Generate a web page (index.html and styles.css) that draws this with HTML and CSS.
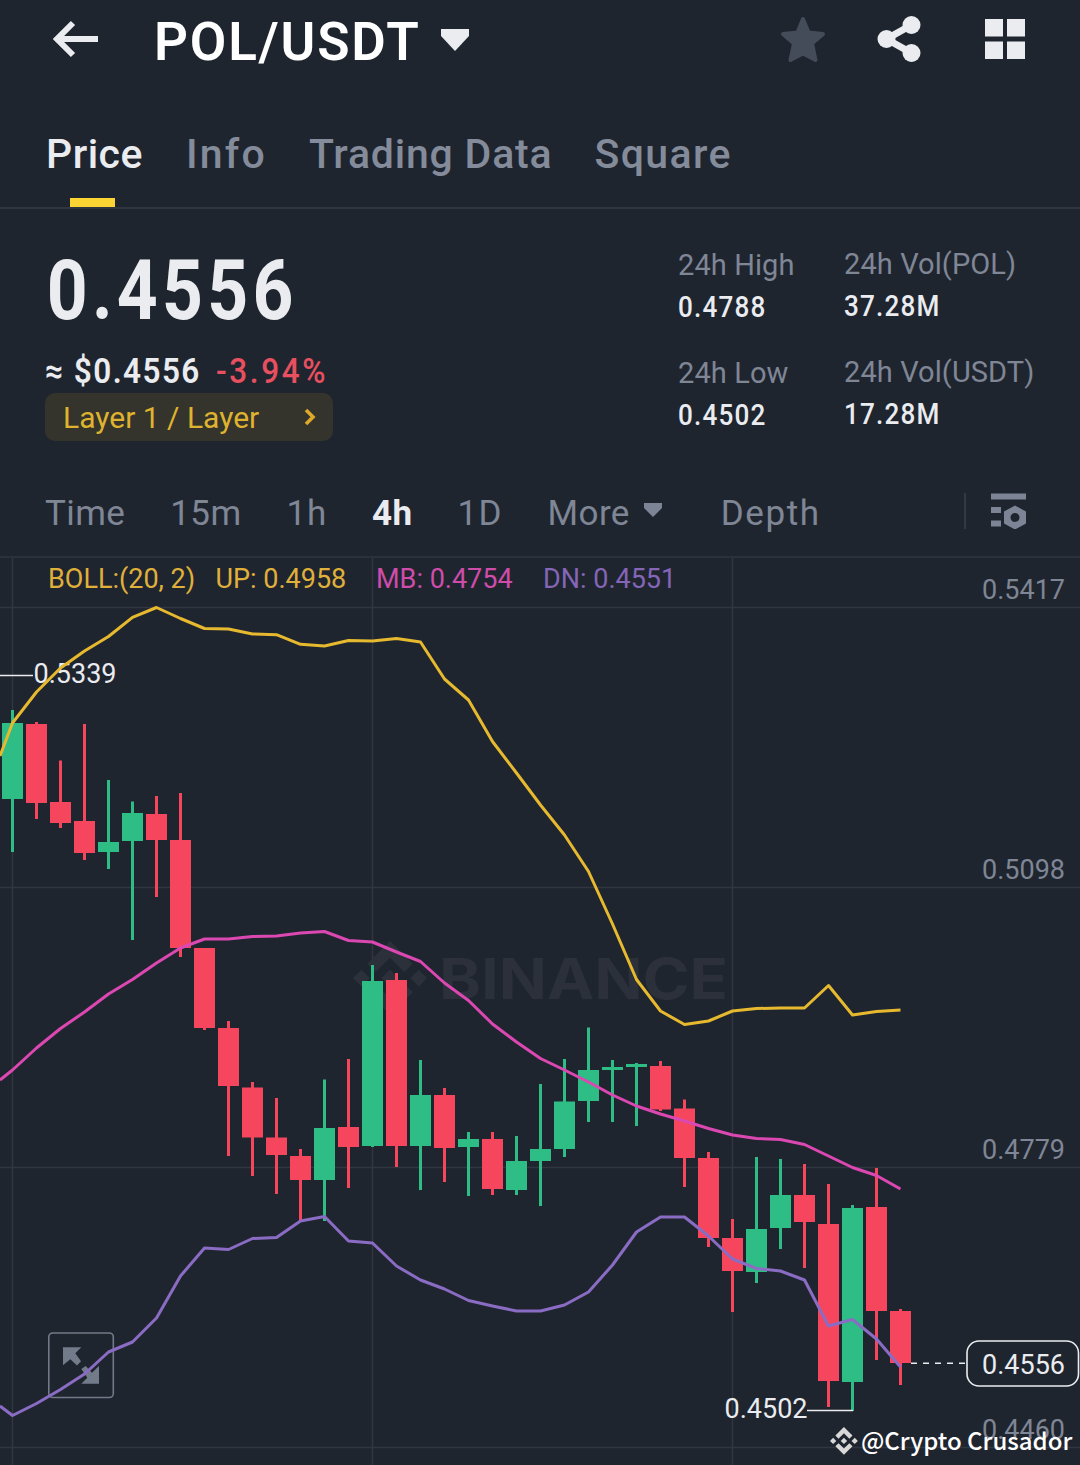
FILE: index.html
```
<!DOCTYPE html>
<html lang="en">
<head>
  <meta charset="UTF-8" />
  <meta name="viewport" content="width=device-width, initial-scale=1.0"/>
  <title>POL/USDT</title>
  <link rel="stylesheet" href="styles.css">
</head>
<body>
  <header class="header">
    <svg class="back" width="48" height="40" viewBox="0 0 48 40">
      <path d="M47 20H6M22 4L6 20l16 16" fill="none" stroke="#eaecef" stroke-width="6"/>
    </svg>
    <h1 class="pair">POL/USDT</h1>
    <svg class="pair-caret" width="28" height="22" viewBox="0 0 28 22">
      <path d="M0 0h28v7L14 22 0 7z" fill="#eaecef"/>
    </svg>
    <div class="actions">
      <svg width="46" height="48" viewBox="0 0 46 48">
        <path d="M23 3l5.500 13.500L43 18 32 27.500l3.500 16.500L23 37.500 10.500 44 14 27.500 3 18l14.500-1.500z" fill="#444c5a" stroke="#444c5a" stroke-width="4" stroke-linejoin="round"/>
      </svg>
      <svg class="share" width="44" height="48" viewBox="0 0 44 48">
        <path d="M34.500 10L9.500 24l25 14" fill="none" stroke="#eaecef" stroke-width="7"/>
        <circle cx="9.500" cy="24" r="9" fill="#eaecef"/>
        <circle cx="34.500" cy="10" r="9" fill="#eaecef"/>
        <circle cx="34.500" cy="38" r="9" fill="#eaecef"/>
      </svg>
      <svg class="grid-icon" width="40" height="40" viewBox="0 0 40 40">
        <path d="M0 0h18v17.500H0zM22 0h18v17.500H22zM0 22.500h18V40H0zM22 22.500h18V40H22z" fill="#eaecef"/>
      </svg>
    </div>
  </header>

  <nav class="tabs">
    <a class="tab tab-price active">Price</a>
    <a class="tab tab-info">Info</a>
    <a class="tab">Trading Data</a>
    <a class="tab tab-square">Square</a>
  </nav>

  <section class="summary">
    <div class="quote">
      <div class="last-price">0.4556</div>
      <div class="quote-row">
        <span class="usd">≈ $0.4556</span>
        <span class="change">-3.94%</span>
      </div>
      <div class="tag">
        <span>Layer 1 / Layer</span>
        <svg width="12" height="18" viewBox="0 0 12 18">
          <path d="M2 2l7 7-7 7" fill="none" stroke="#dca92a" stroke-width="3.600"/>
        </svg>
      </div>
    </div>
    <div class="stats">
      <div class="stats-col">
        <div class="label">24h High</div>
        <div class="value">0.4788</div>
        <div class="label">24h Low</div>
        <div class="value">0.4502</div>
      </div>
      <div class="stats-col stats-vol">
        <div class="label">24h Vol(POL)</div>
        <div class="value">37.28M</div>
        <div class="label">24h Vol(USDT)</div>
        <div class="value">17.28M</div>
      </div>
    </div>
  </section>

  <nav class="intervals">
    <span>Time</span>
    <span>15m</span>
    <span class="short">1h</span>
    <span class="active">4h</span>
    <span class="day">1D</span>
    <span class="more">More
      <svg width="18" height="14" viewBox="0 0 18 14"><path d="M0 0h18v5L9 14 0 5z" fill="#7c8496"/></svg>
    </span>
    <span class="depth">Depth</span>
    <div class="tools">
      <svg width="36" height="36" viewBox="0 0 36 36">
        <path d="M0 .5h35v6H0zM0 14h10v6H0zM0 27.500h10v6H0z" fill="#7c8496"/>
        <path fill-rule="evenodd" d="M24 12.500l11 6v12l-11 6-11-6v-12zM24 20a4.500 4.500 0 1 0 0 9 4.500 4.500 0 0 0 0-9z" fill="#7c8496"/>
      </svg>
    </div>
  </nav>

  <svg class="chart" width="1080" height="907" viewBox="0 558 1080 907">
    <defs>
      <path id="logo" d="M38.730 53.200l24.590-24.580 24.600 24.600 14.300-14.310L63.320 0l-38.900 38.900zM0 63.310L14.300 49l14.310 14.310-14.310 14.300zM38.730 73.410L63.320 98l24.600-24.600 14.310 14.290-38.910 38.910-38.900-38.880zM98 63.310L112.300 49l14.310 14.300-14.310 14.320zM77.830 63.300L63.320 48.780 48.810 63.280l14.510 14.500z"/>
    </defs>

    <!-- grid -->
    <path class="grid" d="M12.500 558V1465M372.500 558V1465M732.500 558V1465M0 607.500H1080M0 887.500H1080M0 1167.500H1080M0 1447.500H1080"/>

    <g class="brand">
      <use href="#logo" transform="translate(353 941) scale(.585)"/>
      <text x="439" y="998.500" textLength="289" lengthAdjust="spacingAndGlyphs">BINANCE</text>
    </g>

    <text class="mark" x="33.500" y="682.500">0.5339</text>
    <path class="mark-line" d="M0 675.500H33"/>

    <g id="candles"></g>

    <rect class="expand" x="48.800" y="1333" width="64.500" height="64.500" rx="4"/>
    <path class="expand-arrows" d="M63 1347.300h18.300l-6 6 5.700 8-4 4.300-6.700-6.300-7.300 6zM99 1366v17.700H81.300l6-6-6-8.700 4.400-3 6.300 6.700z"/>

    <g id="bands"></g>

    <g class="boll">
      <text class="up" x="48" y="588">BOLL:(20, 2)</text>
      <text class="up" x="215.500" y="588">UP: 0.4958</text>
      <text class="mb" x="376" y="588">MB: 0.4754</text>
      <text class="dn" x="543" y="588">DN: 0.4551</text>
    </g>

    <g class="axis">
      <text x="982" y="599">0.5417</text>
      <text x="982" y="879">0.5098</text>
      <text x="982" y="1159">0.4779</text>
      <text x="982" y="1438.500">0.4460</text>
    </g>

    <text class="mark" x="724.500" y="1418">0.4502</text>
    <path class="mark-line" d="M807 1410.500H853"/>

    <path class="mark-line" d="M911 1363.300H966" stroke-dasharray="6 6"/>
    <rect class="price-box" x="967" y="1341" width="111.500" height="45" rx="12"/>
    <text class="mark" x="982" y="1373.500">0.4556</text>

    <use href="#logo" transform="translate(830 1427) scale(.22)" fill="#d8d8d8"/>
    <text class="author" x="861" y="1449.500">@Crypto Crusador</text>
  </svg>

  <script src="chart.js"></script>
</body>
</html>
```
FILE: styles.css
```
body {
  margin: 0;
  width: 1080px;
  background-color: #1f252f;
  color: #eaecef;
  font-family: Roboto, sans-serif;
  overflow: hidden;
}

svg {
  display: block;
  flex-shrink: 0;
}

/* header */
.header {
  display: flex;
  align-items: center;
  height: 80px;
  padding: 0 55px 0 51px;
}

.back {
  margin-bottom: 2px;
}

.pair {
  margin: 4px 0 0 55px;
  font-size: 53px;
  font-weight: 600;
  line-height: 60px;
  letter-spacing: 1.8px;
  color: #fff;
}

.pair-caret {
  margin-left: 20px;
}

.actions {
  display: flex;
  align-items: center;
  margin-left: auto;
}

.share {
  margin: 0 64px 2px 51px;
}

.grid-icon {
  margin-bottom: 2px;
}

/* tabs */
.tabs {
  display: flex;
  gap: 42px;
  height: 127px;
  padding-left: 46px;
  border-bottom: 2px solid #30363f;
}

.tab {
  display: flex;
  flex-direction: column;
  align-items: center;
  justify-content: space-between;
  padding-top: 50px;
  font-size: 41px;
  font-weight: 500;
  line-height: 48px;
  letter-spacing: 0.8px;
  color: #848b9a;
}

.tab-price {
  letter-spacing: 0.5px;
}

.tab-info {
  padding-left: 1px;
  letter-spacing: 2.2px;
}

.tab-square {
  letter-spacing: 1.4px;
}

.tab.active {
  color: #eaecef;
}

.tab.active::after {
  content: "";
  width: 45px;
  height: 9px;
  margin-right: 3px;
  background-color: #fcd535;
}

/* price summary */
.summary {
  display: flex;
  justify-content: space-between;
  height: 261px;
  padding: 0 45px;
}

.quote {
  padding-top: 40px;
}

/* digits are narrowed and spaced out, close to a DIN face */
.last-price {
  width: 290px;
  padding-left: 2px;
  font-size: 84px;
  font-weight: 700;
  line-height: 84px;
  letter-spacing: 5px;
  transform: scaleX(0.85);
  transform-origin: left;
}

.quote-row {
  display: flex;
  margin-top: 18px;
  font-size: 35px;
  line-height: 42px;
}

.usd {
  width: 171px;
  font-weight: 600;
  letter-spacing: 1.6px;
  white-space: nowrap;
  transform: scaleX(0.9);
  transform-origin: left;
}

.change {
  font-weight: 500;
  letter-spacing: 2.9px;
  color: #e8505f;
  transform: scaleX(0.9);
  transform-origin: left;
}

.tag {
  display: flex;
  align-items: center;
  justify-content: space-between;
  box-sizing: border-box;
  width: 288px;
  height: 48px;
  padding: 0 17px 0 18px;
  border-radius: 10px;
  background-color: #35342c;
  color: #dfb32f;
  font-size: 30px;
}

.stats {
  display: flex;
  width: 357px;
  padding-top: 38px;
}

.stats-col {
  width: 166px;
}

.stats-vol {
  margin-top: -1px;
  white-space: nowrap;
}

.label {
  font-size: 29px;
  line-height: 36px;
  letter-spacing: 0.1px;
  color: #7f8695;
}

.value {
  margin: 6px 0 30px;
  font-size: 29px;
  font-weight: 500;
  line-height: 36px;
  letter-spacing: 1.3px;
  transform: scaleX(0.9);
  transform-origin: left;
}

/* intervals */
.intervals {
  display: flex;
  align-items: center;
  gap: 45px;
  height: 85px;
  padding: 1px 53px 0 45px;
  border-bottom: 2px solid #2a313b;
  font-size: 35px;
  letter-spacing: 0.4px;
  color: #7f8695;
}

.intervals .active {
  font-weight: 700;
  color: #eaecef;
}

.intervals .short {
  letter-spacing: 0.8px;
}

.intervals .day {
  letter-spacing: 1.2px;
}

.more {
  display: flex;
  align-items: center;
  gap: 14px;
}

.more svg {
  margin-bottom: 8px;
}

.depth {
  margin-left: 14px;
  letter-spacing: 1.6px;
}

.tools {
  margin: 0 0 6px auto;
  padding-left: 25px;
  border-left: 2px solid #323943;
}

/* chart */
.chart text {
  font-size: 27px;
}

.grid {
  fill: none;
  stroke: #303741;
  stroke-width: 1.5;
}

.brand {
  fill: #2b303b;
}

.chart .brand text {
  font-family: Inter, sans-serif;
  font-size: 56px;
  font-weight: 700;
}

.green {
  fill: #2ebd85;
}

.red {
  fill: #f6465d;
}

.band {
  fill: none;
  stroke-width: 3;
  stroke-linejoin: round;
}

.band-up {
  stroke: #e6b92f;
}

.band-mb {
  stroke: #dc48b2;
}

.band-dn {
  stroke: #8b6cc4;
}

.up {
  fill: #e0b13a;
}

.mb {
  fill: #cf4cab;
}

.dn {
  fill: #8465b8;
}

.axis {
  fill: #7f8695;
}

.mark {
  fill: #eaecef;
}

.mark-line {
  stroke: #eaecef;
  stroke-width: 1.6;
}

.price-box {
  fill: #1f252f;
  stroke: #eaecef;
  stroke-width: 1.6;
}

.expand {
  fill: none;
  stroke: #727a89;
  stroke-width: 1.6;
}

.expand-arrows {
  fill: #727b8a;
}

.chart .author {
  font-family: "Noto Sans CJK SC", sans-serif;
  font-size: 24px;
  font-weight: 500;
  fill: #fff;
}
```
FILE: chart.js
```
// high, body top, body bottom, low, up (1) or down (0)
const candles = [
  [710, 723, 799, 852, 1], [722, 724, 803, 819, 0], [760.5, 802, 823, 828, 0], [724, 821, 853, 860, 0],
  [780, 842, 852, 869, 1], [801.5, 813, 841, 940, 1], [796, 814, 840, 897, 0], [793, 840, 948, 957, 0],
  [948, 948, 1028, 1030, 0], [1021, 1028, 1086, 1156, 0], [1082, 1087.5, 1137.5, 1176, 0], [1098, 1137.5, 1155, 1194, 0],
  [1149, 1156, 1180, 1220, 0], [1079.5, 1128, 1180, 1221, 1], [1059, 1127, 1147, 1188, 0], [965, 981, 1146, 1147, 1],
  [973, 980, 1146, 1167, 0], [1060, 1095, 1146, 1190, 1], [1088, 1095, 1148, 1182, 0], [1132, 1139, 1147, 1196, 1],
  [1132, 1139, 1189, 1195, 0], [1136, 1161, 1190, 1195, 1], [1084, 1149, 1161, 1206, 1], [1059, 1101.5, 1149, 1157, 1],
  [1027.5, 1070, 1101, 1122, 1], [1060, 1067, 1070, 1122, 1], [1063, 1064, 1067, 1126, 1], [1061, 1066, 1109.5, 1111, 0],
  [1099.5, 1108.5, 1158, 1187, 0], [1152, 1158, 1238, 1247, 0], [1219, 1238, 1271, 1312, 0], [1157, 1229, 1272, 1283, 1],
  [1159, 1195, 1228, 1249, 1], [1164, 1195, 1222, 1268, 0], [1184, 1224, 1381, 1407, 0], [1205, 1208, 1382, 1411, 1],
  [1168, 1207, 1311, 1360, 0], [1309, 1311, 1363, 1385, 0]
];

// first value is the point at the left edge, the rest follow the candles
const bands = {
  up: [756, 723, 692, 668, 651, 636.5, 617.3, 607.5, 618.5, 628.5, 629, 634, 634.7, 644.3, 646, 640.5, 641, 638.5, 642,
    679, 700, 741.5, 773, 805, 835, 871.5, 924, 979.5, 1011, 1024.5, 1021, 1011, 1008.5, 1008, 1008, 985.5, 1015, 1011.5, 1010],
  mb: [1080, 1070, 1048, 1028.5, 1012, 994, 979.5, 963, 948, 939, 939, 936.5, 936, 933, 931.5, 940.5, 942, 952, 961.5,
    983, 1000.5, 1024, 1042, 1058.5, 1070, 1082, 1095, 1106, 1114, 1121, 1128.5, 1135, 1138.5, 1139.5, 1144.5, 1156, 1167.5, 1175.5, 1189],
  dn: [1406, 1415.5, 1403.5, 1389.5, 1374, 1352, 1342, 1318, 1276, 1248, 1249.5, 1238.5, 1237.5, 1221, 1216.5, 1241, 1243, 1266, 1280,
    1289, 1300.5, 1306, 1311, 1311, 1305, 1292, 1265, 1232, 1217, 1217, 1236, 1259, 1268.5, 1271, 1280, 1326, 1319.5, 1339, 1367]
};

const step = 24;

document.getElementById("candles").innerHTML = candles.map(([high, top, bottom, low, up], i) => {
  const x = 2 + i * step;
  return `<g class="${up ? "green" : "red"}">
    <rect x="${x + 9}" y="${high}" width="3" height="${low - high}"/>
    <rect x="${x}" y="${top}" width="21" height="${bottom - top}"/>
  </g>`;
}).join("");

document.getElementById("bands").innerHTML = Object.keys(bands).map(name => {
  const points = bands[name].map((y, i) => `${i === 0 ? 0 : 12.5 + (i - 1) * step},${y}`).join(" ");
  return `<polyline class="band band-${name}" points="${points}"/>`;
}).join("");
```
